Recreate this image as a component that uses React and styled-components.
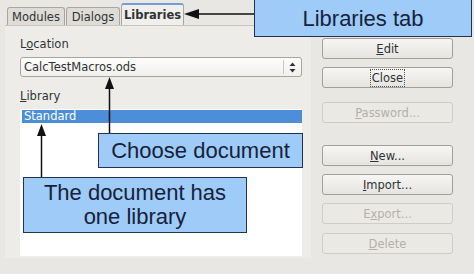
import styled, { createGlobalStyle } from "styled-components"

const GlobalStyle = createGlobalStyle`
   html, body {
      margin: 0;
      padding: 0;
      background: #e9e7e3;
      overflow: hidden;
   }
   body {
      font-family: "DejaVu Sans", "Liberation Sans", sans-serif;
      font-size: 11.5px;
      color: #2e3436;
   }
`

const Page = styled.div`
   position: relative;
   width: 474px;
   height: 274px;
   display: flex;
   align-items: flex-start;
   padding: 3px 0 0 5px;
   box-sizing: border-box;
`

const LeftColumn = styled.div`
   width: 306px;
   display: flex;
   flex-direction: column;
`

const TabBar = styled.div`
   display: flex;
   align-items: flex-end;
   gap: 1px;
   height: 22px;
   padding-left: 2px;
`

const Tab = styled.div`
   width: ${p => p.$w}px;
   height: ${p => (p.$active ? 22 : 18)}px;
   box-sizing: border-box;
   display: flex;
   align-items: center;
   justify-content: center;
   border: 1px solid #aaa69f;
   border-bottom: none;
   border-top: ${p => (p.$active ? "2px solid #6f9fd8" : "1px solid #aaa69f")};
   border-radius: 3px 3px 0 0;
   background: ${p => (p.$active ? "#f1efec" : "#dfdcd7")};
   font-weight: ${p => (p.$active ? "bold" : "normal")};
   color: #2e3436;
   line-height: 14px;
`

const Panel = styled.div`
   height: 233px;
   box-sizing: border-box;
   border-top: 1px solid #c8c5bf;
   background: #eeece9;
   padding: 11px 9px 0 15px;
   display: flex;
   flex-direction: column;
`

const Label = styled.div`
   line-height: 14px;
   margin-top: ${p => p.$mt || 0}px;
   color: #2e3436;
`

const Combo = styled.div`
   margin-top: 6px;
   height: 20px;
   box-sizing: border-box;
   border: 1px solid #a8a59f;
   border-radius: 3px;
   background: linear-gradient(#fdfdfc, #f1f0ee);
   display: flex;
   align-items: center;
   padding-left: 3px;
`

const ComboText = styled.span`
   flex: 1;
   line-height: 14px;
`

const ComboSpin = styled.div`
   width: 17px;
   height: 14px;
   border-left: 1px solid #c9c6c0;
   display: flex;
   align-items: center;
   justify-content: center;
`

const ListBox = styled.div`
   margin-top: 6px;
   height: 147px;
   background: #ffffff;
   box-sizing: border-box;
   padding: 1px 0 0 2px;
`

const ListItem = styled.div`
   height: 13px;
   line-height: 13px;
   padding-left: 2px;
   background: ${p => (p.$selected ? "#4c8ed8" : "transparent")};
   color: ${p => (p.$selected ? "#ffffff" : "#2e3436")};
`

const ButtonColumn = styled.div`
   margin-left: 11px;
   display: flex;
   flex-direction: column;
   padding-top: 35px;
`

const Button = styled.div`
   width: 131px;
   height: 21px;
   margin-top: ${p => p.$mt || 0}px;
   box-sizing: border-box;
   border: 1px solid ${p => (p.$disabled ? "#cfccc6" : "#a29f99")};
   border-radius: 3px;
   background: ${p => (p.$disabled ? "#ebe9e6" : "linear-gradient(#f7f6f4, #e6e4e0)")};
   color: ${p => (p.$disabled ? "#b3b0aa" : "#2e3436")};
   display: flex;
   align-items: center;
   justify-content: center;
   line-height: 14px;
`

const Focus = styled.span`
   outline: 1px dotted #555;
   outline-offset: 1px;
`

const Callout = styled.div`
   position: absolute;
   left: ${p => p.$x}px;
   top: ${p => p.$y}px;
   width: ${p => p.$w}px;
   height: ${p => p.$h}px;
   box-sizing: border-box;
   background: #9ecbf7;
   border: 1.5px solid #22324f;
   display: flex;
   align-items: center;
   justify-content: center;
   text-align: center;
   font-family: "Liberation Sans", Arial, sans-serif;
   font-size: 22px;
   line-height: 24px;
   color: #16223b;
   padding-top: ${p => p.$pt || 0}px;
`

const Arrows = styled.svg`
   position: absolute;
   left: 0;
   top: 0;
   pointer-events: none;
`

const SpinIcon = () => (
   <svg width="7" height="11" viewBox="0 0 7 11">
      <polygon points="3.5,0.5 6.5,4 0.5,4" fill="#2e3436" />
      <polygon points="3.5,10.5 6.5,7 0.5,7" fill="#2e3436" />
   </svg>
)

const App = () => {
   return (
      <>
         <GlobalStyle />
         <Page>
            <LeftColumn>
               <TabBar>
                  <Tab $w={58}>Modules</Tab>
                  <Tab $w={54}>Dialogs</Tab>
                  <Tab $w={63} $active>Libraries</Tab>
               </TabBar>
               <Panel>
                  <Label>L<u>o</u>cation</Label>
                  <Combo>
                     <ComboText>CalcTestMacros.ods</ComboText>
                     <ComboSpin><SpinIcon /></ComboSpin>
                  </Combo>
                  <Label $mt={12}><u>L</u>ibrary</Label>
                  <ListBox>
                     <ListItem $selected>Standard</ListItem>
                  </ListBox>
               </Panel>
            </LeftColumn>
            <ButtonColumn>
               <Button><span><u>E</u>dit</span></Button>
               <Button $mt={8}><Focus>Close</Focus></Button>
               <Button $mt={14} $disabled><span><u>P</u>assword...</span></Button>
               <Button $mt={22}><span><u>N</u>ew...</span></Button>
               <Button $mt={8}><span><u>I</u>mport...</span></Button>
               <Button $mt={8} $disabled><span>E<u>x</u>port...</span></Button>
               <Button $mt={9} $disabled><span><u>D</u>elete</span></Button>
            </ButtonColumn>

            <Arrows width="474" height="274" viewBox="0 0 474 274">
               <line x1="196" y1="14" x2="255" y2="14" stroke="#111" strokeWidth="1.5" />
               <polygon points="184,14 199,9 199,19" fill="#111" />
               <line x1="109.5" y1="88" x2="109.5" y2="134" stroke="#111" strokeWidth="1.5" />
               <polygon points="109.5,77 105,89 114,89" fill="#111" />
               <line x1="41.5" y1="135" x2="41.5" y2="178" stroke="#111" strokeWidth="1.5" />
               <polygon points="41.5,124 37,136 46,136" fill="#111" />
            </Arrows>

            <Callout $x={254} $y={-2} $w={218} $h={39} $pt={2}>Libraries tab</Callout>
            <Callout $x={98} $y={133} $w={205} $h={35}>Choose document</Callout>
            <Callout $x={23} $y={177} $w={224} $h={56}>The document has<br />one library</Callout>
         </Page>
      </>
   )
}

export default App
